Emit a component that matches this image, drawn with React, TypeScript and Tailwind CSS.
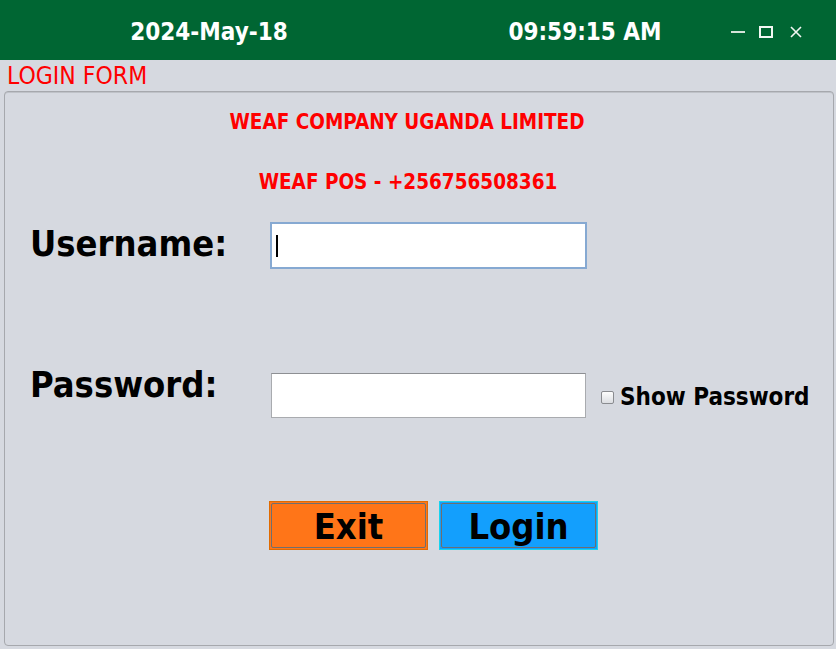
import { useState } from "react";

const tahoma = "font-['DejaVu_Sans',sans-serif] [font-stretch:condensed]";

const WindowControls = () => {
  return (
    <div className="flex items-center gap-[14px] pl-[7px]">
      <span className="block h-[2px] w-[14px] bg-[#d5e3d9]" />
      <span className="block h-[12px] w-[14px] border-2 border-t-[2px] border-[#f2f7f3]" />
      <svg width="12" height="12" viewBox="0 0 12 12" className="ml-[3px]">
        <path d="M1 1 L11 11 M11 1 L1 11" stroke="#f2f7f3" strokeWidth="1.6" />
      </svg>
    </div>
  );
};

const TitleBar = () => {
  return (
    <div className="flex h-[60px] items-center bg-[#006633] pt-[3px] text-white">
      <div className={`w-[418px] text-center text-[24px] font-bold ${tahoma}`}>
        2024-May-18
      </div>
      <div className={`w-[306px] pl-[28px] text-center text-[24px] font-bold ${tahoma}`}>
        09:59:15 AM
      </div>
      <WindowControls />
    </div>
  );
};

export default function App() {
  const [showPassword, setShowPassword] = useState(false);

  return (
    <div className="flex h-[649px] w-[836px] flex-col overflow-hidden bg-[#d6d9e0]">
      <TitleBar />
      <div
        className={`h-[31px] pl-[7px] pt-[3px] text-[24.5px] leading-[26px] text-[#ff0000] ${tahoma}`}
      >
        LOGIN FORM
      </div>
      <div className="ml-[4px] flex h-[555px] w-[830px] flex-col rounded-[4px] border border-[#a6a8ad] bg-[#d6d9e0] shadow-[inset_0_1px_0_#bfc2c8]">
        <div
          className={`w-[804px] pt-[18px] text-center text-[20.5px] font-bold leading-[24px] text-[#ff0000] ${tahoma}`}
        >
          WEAF COMPANY UGANDA LIMITED
        </div>
        <div
          className={`w-[806px] pt-[36px] text-center text-[20.5px] font-bold leading-[24px] text-[#ff0000] ${tahoma}`}
        >
          WEAF POS - +256756508361
        </div>

        <div className="mt-[28px] flex h-[47px] items-center">
          <div className={`-mt-[3px] w-[265px] pl-[25px] text-[36px] font-bold text-black ${tahoma}`}>
            Username:
          </div>
          <div className="flex h-[47px] w-[317px] items-center border-2 border-[#86a9d2] bg-white pl-[4px]">
            <span className="block h-[22px] w-[2px] bg-black" />
          </div>
        </div>

        <div className="mt-[104px] flex h-[45px] items-start">
          <div
            className={`-mt-[15px] w-[266px] pl-[25px] text-[36px] font-bold text-black ${tahoma}`}
          >
            Password:
          </div>
          <input
            type={showPassword ? "text" : "password"}
            className="h-[45px] w-[315px] border border-[#a9abaf] border-t-[#8d8f93] bg-white outline-none"
          />
          <label className="ml-[15px] flex items-center gap-[6px] pt-[6px]">
            <input
              type="checkbox"
              checked={showPassword}
              onChange={(e) => setShowPassword(e.target.checked)}
              className="h-[13px] w-[13px] appearance-none rounded-[2px] border border-[#8a8c90] bg-gradient-to-b from-[#fdfdfd] to-[#dcdee2]"
            />
            <span className={`text-[24px] font-bold text-black ${tahoma}`}>Show Password</span>
          </label>
        </div>

        <div className="mt-[83px] flex gap-[11px] pl-[264px]">
          <button className="h-[49px] w-[159px] border border-[#e06a00] bg-[#ff7518] p-[1px]">
            <span
              className={`flex h-full w-full items-center justify-center rounded-[2px] border border-[#6f6f6f] pt-[3px] text-[36px] font-bold text-black ${tahoma}`}
            >
              Exit
            </span>
          </button>
          <button className="h-[49px] w-[159px] border border-[#14d4f0] bg-[#139ffd] p-[1px]">
            <span
              className={`flex h-full w-full items-center justify-center rounded-[2px] border border-[#6f6f6f] pt-[3px] text-[36px] font-bold text-black ${tahoma}`}
            >
              Login
            </span>
          </button>
        </div>
      </div>
    </div>
  );
}
